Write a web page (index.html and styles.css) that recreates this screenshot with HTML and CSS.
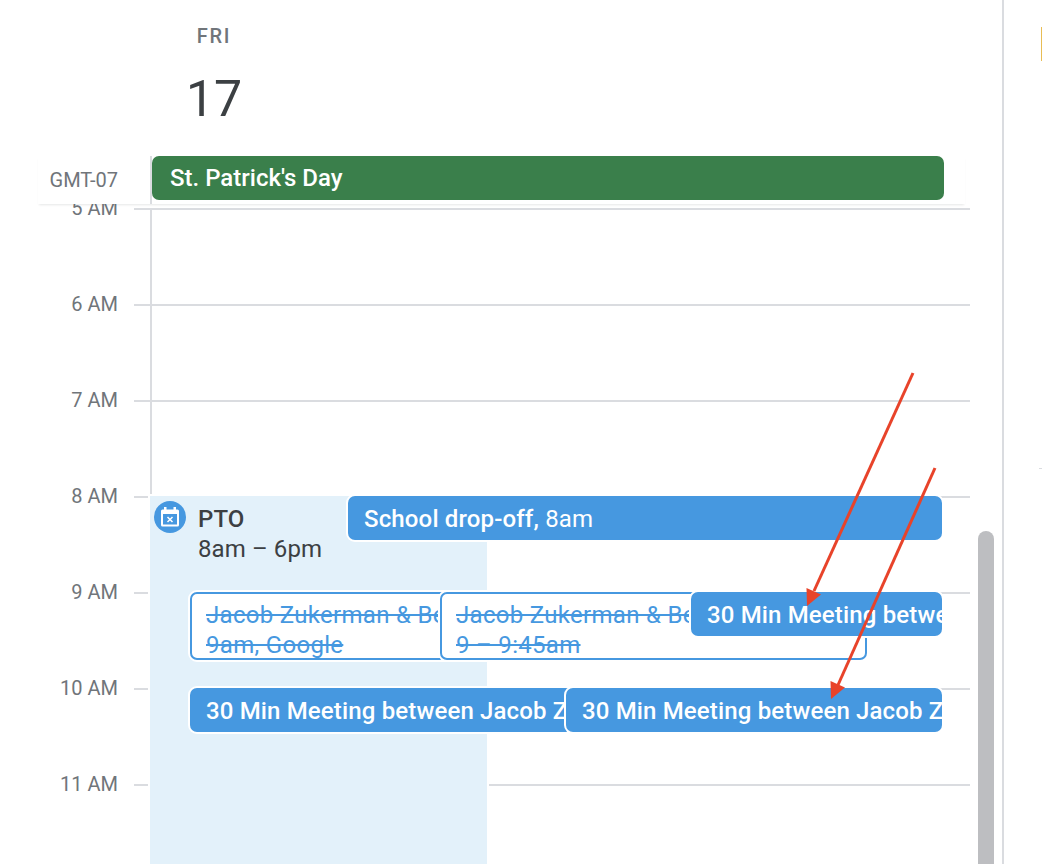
FILE: index.html
```html
<!DOCTYPE html>
<html lang="en">
<head>
  <meta charset="UTF-8">
  <meta name="viewport" content="width=device-width, initial-scale=1.0">
  <title>Calendar</title>
  <link rel="stylesheet" href="styles.css">
</head>
<body>
  <div class="page">
    <main class="calendar">
      <header class="cal-head">
        <div class="day-head">
          <div class="day-name">FRI</div>
          <div class="day-num">17</div>
        </div>
        <div class="all-day">
          <div class="tz">GMT-07</div>
          <div class="holiday">St. Patrick's Day</div>
        </div>
      </header>

      <section class="grid">
        <div class="hour"><span class="hour-label">5 AM</span><span class="hour-rule"></span></div>
        <div class="hour"><span class="hour-label">6 AM</span><span class="hour-rule"></span></div>
        <div class="hour"><span class="hour-label">7 AM</span><span class="hour-rule"></span></div>
        <div class="hour"><span class="hour-label">8 AM</span><span class="hour-rule"></span></div>
        <div class="hour"><span class="hour-label">9 AM</span><span class="hour-rule"></span></div>
        <div class="hour"><span class="hour-label">10 AM</span><span class="hour-rule"></span></div>
        <div class="hour"><span class="hour-label">11 AM</span><span class="hour-rule"></span></div>

        <div class="events">
          <div class="pto">
            <svg class="pto-icon" width="32" height="32" viewBox="0 0 32 32">
              <circle cx="16" cy="16" r="16" fill="#4698e0"/>
              <path fill="#fff" d="M10 6h2.500v2.500h7V6H22v2.500h1.500A1.500 1.500 0 0 1 25 10v14a1.500 1.500 0 0 1-1.500 1.500h-15A1.500 1.500 0 0 1 7 24V10a1.500 1.500 0 0 1 1.500-1.500H10z"/>
              <rect x="9" y="13" width="14" height="10.500" fill="#4698e0"/>
              <path stroke="#fff" stroke-width="1.500" d="M13.500 16l5 5M18.500 16l-5 5"/>
            </svg>
            <div class="pto-text">
              <div class="pto-title">PTO</div>
              <div>8am – 6pm</div>
            </div>
          </div>

          <div class="event solid drop-off">School drop-off, <span class="event-time">8am</span></div>

          <div class="event outline declined-a">
            <div class="struck">Jacob Zukerman &amp; Be</div>
            <div class="struck">9am, Google</div>
          </div>
          <div class="event outline declined-b">
            <div class="struck">Jacob Zukerman &amp; Be</div>
            <div class="struck">9 – 9:45am</div>
          </div>
          <div class="event solid meet-a">30 Min Meeting betwe</div>
          <div class="event solid meet-b">30 Min Meeting between Jacob Z</div>
          <div class="event solid meet-c">30 Min Meeting between Jacob Z</div>
        </div>
      </section>

      <div class="scroll-thumb"></div>
    </main>

    <aside class="side">
      <div class="side-mark"></div>
      <div class="side-tick"></div>
    </aside>
  </div>

  <svg class="arrows" width="1042" height="864" viewBox="0 0 1042 864">
    <path d="M913 373L814 591" stroke="#e8432a" stroke-width="3" fill="none"/>
    <path d="M807 606L806.500 588L821 594.500z" fill="#e8432a"/>
    <path d="M935 468L838 685" stroke="#e8432a" stroke-width="3" fill="none"/>
    <path d="M831 699L830.500 681L845 687.500z" fill="#e8432a"/>
  </svg>
</body>
</html>
```

FILE: styles.css
```css
html, body {
  margin: 0;
  padding: 0;
  height: 864px;
  overflow: hidden;
  background-color: #fff;
}

body {
  font-family: Roboto, "Liberation Sans", sans-serif;
  color: #3c4043;
  position: relative;
}

.page {
  display: flex;
  height: 864px;
}

.calendar {
  width: 1002px;
  border-right: 2px solid #dadce0;
  position: relative;
  overflow: hidden;
}

/* header sits on top of the hour grid so 5 AM gets cut off */
.cal-head {
  position: relative;
  z-index: 3;
  background-color: #fff;
  height: 204px;
  width: 965px;
}

.day-head {
  width: 130px;
  margin-left: 149px;
  height: 156px;
  text-align: center;
}

.day-name {
  padding-top: 25px;
  font-size: 20px;
  line-height: 22px;
  font-weight: 500;
  letter-spacing: 1.8px;
  color: #70757a;
}

.day-num {
  margin-top: 19px;
  font-size: 50px;
  line-height: 66px;
  color: #3c4043;
}

.all-day {
  display: flex;
  height: 48px;
  margin-left: 38px;
  box-shadow: 0 2px 2px -1px rgba(60, 64, 67, 0.12);
}

.tz {
  width: 80px;
  padding-top: 13px;
  text-align: right;
  font-size: 20px;
  line-height: 22px;
  color: #70757a;
}

.holiday {
  width: 774px;
  height: 44px;
  margin-left: 34px;
  padding-left: 18px;
  background-color: #3a7f4b;
  border-radius: 7px;
  color: #fff;
  font-size: 24px;
  line-height: 45px;
  font-weight: 500;
}

.all-day::before {
  content: "";
  position: absolute;
  left: 150px;
  top: 156px;
  width: 2px;
  height: 48px;
  background-color: #dadce0;
}

.grid {
  position: relative;
  margin-top: 4px;
}

.hour {
  display: flex;
  height: 96px;
}

.hour-label {
  width: 118px;
  margin-top: -11px;
  text-align: right;
  font-size: 20px;
  line-height: 22px;
  color: #70757a;
}

.hour-rule {
  width: 836px;
  height: 2px;
  margin-left: 16px;
  background-color: #dadce0;
}

.events {
  position: absolute;
  left: 150px;
  top: 0;
  width: 794px;
  height: 656px;
}

.events::before {
  content: "";
  position: absolute;
  left: 0;
  top: 0;
  width: 2px;
  height: 288px;
  background-color: #dadce0;
}

.pto {
  position: absolute;
  left: 0;
  top: 288px;
  width: 337px;
  height: 368px;
  background-color: #e3f1fa;
  box-shadow: 0 0 0 2px #fff;
  display: flex;
  align-items: flex-start;
  font-size: 24px;
  line-height: 30px;
  letter-spacing: 0.1px;
  color: #3c4043;
}

.pto-icon {
  margin: 5px 0 0 4px;
  flex-shrink: 0;
}

.pto-text {
  margin: 8px 0 0 12px;
}

.pto-title {
  font-weight: 500;
}

.event {
  position: absolute;
  box-sizing: border-box;
  border-radius: 7px;
  overflow: hidden;
  white-space: nowrap;
  font-size: 24px;
  box-shadow: 0 0 0 2px #fff;
}

.solid {
  background-color: #4698e0;
  color: #fff;
  font-weight: 500;
  line-height: 46px;
  padding-left: 16px;
  letter-spacing: 0.15px;
}

.event-time {
  font-weight: 400;
}

.outline {
  background-color: #fff;
  border: 2px solid #4698e0;
  color: #4698e0;
  line-height: 30px;
  padding: 6px 0 0 14px;
  letter-spacing: 0.3px;
}

.struck {
  text-decoration: line-through;
}

.drop-off { left: 198px; top: 288px; width: 594px; height: 44px; }
.declined-a { left: 40px; top: 384px; width: 420px; height: 68px; }
.declined-b { left: 290px; top: 384px; width: 427px; height: 68px; }
.meet-a { left: 541px; top: 384px; width: 251px; height: 44px; }
.meet-b { left: 40px; top: 480px; width: 420px; height: 44px; }
.meet-c { left: 416px; top: 480px; width: 376px; height: 44px; }

.scroll-thumb {
  position: absolute;
  left: 978px;
  top: 531px;
  bottom: 0;
  width: 16px;
  border-radius: 8px 8px 0 0;
  background-color: #bdbec1;
  z-index: 4;
}

.side {
  flex: 1;
  padding-top: 27px;
}

.side-mark {
  width: 1px;
  height: 34px;
  margin-left: auto;
  background-color: #e8bd55;
}

.side-tick {
  width: 3px;
  height: 1px;
  margin: 407px 0 0 auto;
  background-color: #dadce0;
}

.arrows {
  position: absolute;
  left: 0;
  top: 0;
  z-index: 5;
}
```
